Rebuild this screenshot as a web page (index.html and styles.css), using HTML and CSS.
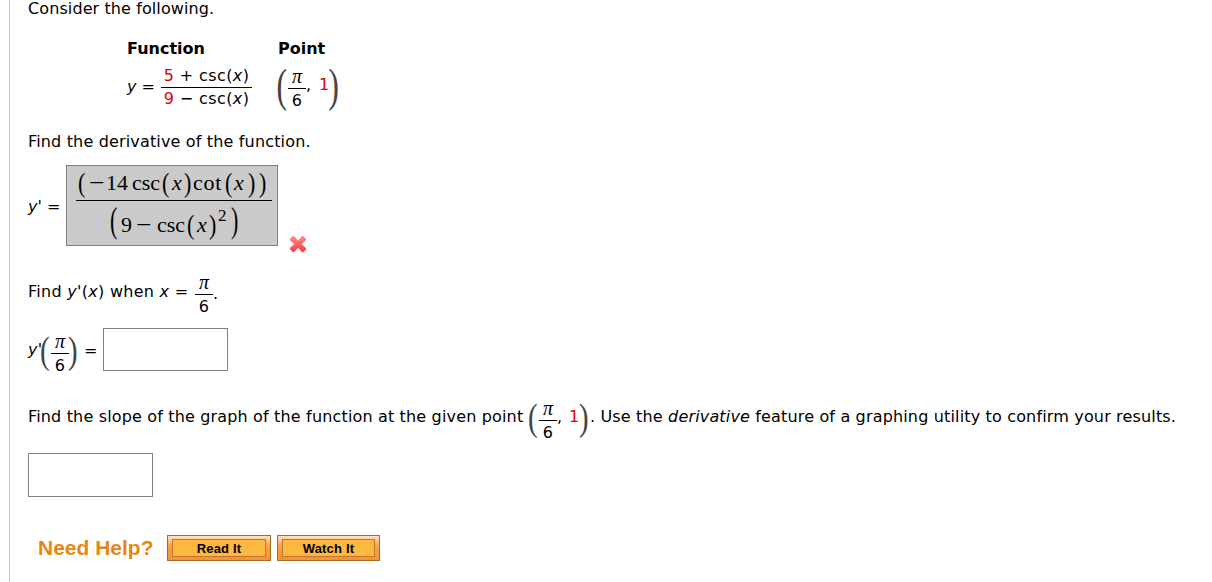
FILE: index.html
```
<!DOCTYPE html>
<html lang="en">
<head>
	<meta charset="UTF-8">
	<title>Derivative Question</title>
	<link rel="stylesheet" href="styles.css">
</head>
<body>
<main class="question">
	<p class="intro">Consider the following.</p>

	<div class="given">
		<div class="function">
			<b>Function</b>
			<div class="math function-math">
				<span class="lhs"><i>y</i> =</span>
				<span class="frac wide">
					<span class="num"><span class="red">5</span> + csc(<i>x</i>)</span>
					<span class="den"><span class="red">9</span> − csc(<i>x</i>)</span>
				</span>
			</div>
		</div>
		<div class="point">
			<b>Point</b>
			<div class="math point-math">
				<span class="paren">(</span>
				<span class="frac low"><span class="num pi">π</span><span class="den">6</span></span>
				<span class="comma">,</span><span class="red one">1</span>
				<span class="paren">)</span>
			</div>
		</div>
	</div>

	<p class="find">Find the derivative of the function.</p>

	<div class="math answer-row">
		<span class="prime-label"><i>y'</i> =</span>
		<div class="answer">
			<div class="tex top">
				<span class="tall w11">(</span><span class="w17 minus">−</span><span class="w26">14</span><span class="w30">csc</span><span class="tall w10">(</span><i class="w12">x</i><span class="tall w9">)</span><span class="w32 cot">cot</span><span class="tall w9">(</span><i class="w14">x</i><span class="tall w11">)</span><span class="tall">)</span>
			</div>
			<div class="tex bottom">
				<span class="taller w11">(</span><span class="w15">9</span><span class="w21 minus">−</span><span class="w30">csc</span><span class="tall w10">(</span><i class="w12">x</i><span class="tall w9">)</span><span class="sup">2</span><span class="taller">)</span>
			</div>
		</div>
		<svg class="wrong" width="18" height="18" viewBox="0 0 18 18">
			<defs>
				<linearGradient id="cross" x1="0" y1="0" x2="0" y2="1">
					<stop offset="0" stop-color="#ff8b8b"/>
					<stop offset="1" stop-color="#f83c3c"/>
				</linearGradient>
			</defs>
			<path d="M1 4L3.6 1.1Q4.6 .6 5.5 1.6L9 5.8L12.5 1.6Q13.5 .6 14.5 1.3L16.8 3.6Q17.5 4.6 16.5 5.6L12.6 9.2L16.8 12.8Q17.5 13.7 16.8 14.7L14.6 16.9Q13.5 17.7 12.5 16.7L9 12.7L5.5 16.7Q4.6 17.6 3.5 16.8L1.2 14.6Q.5 13.5 1.4 12.6L5.4 9.1L1.2 5.6Q.3 4.8 1 4Z" fill="url(#cross)"/>
		</svg>
	</div>

	<div class="math when-row">
		<span class="when">Find <i>y'</i>(<i>x</i>) when <i>x</i> =</span>
		<span class="frac"><span class="num pi">π</span><span class="den">6</span></span><span class="stop">.</span>
	</div>

	<div class="math value-row">
		<i class="value-label">y'</i>
		<span class="paren small">(</span>
		<span class="frac low"><span class="num pi">π</span><span class="den">6</span></span>
		<span class="paren small">)</span>
		<span class="equals">=</span>
		<input class="blank" type="text">
	</div>

	<div class="math slope-row">
		<span class="slope-text">Find the slope of the graph of the function at the given point</span>
		<span class="paren small">(</span>
		<span class="frac low"><span class="num pi">π</span><span class="den">6</span></span>
		<span class="comma">,</span><span class="red one">1</span>
		<span class="paren small">)</span>
		<span class="slope-end">. Use the <i>derivative</i> feature of a graphing utility to confirm your results.</span>
	</div>

	<input class="blank slope-blank" type="text">

	<div class="help">
		<span class="help-title">Need Help?</span>
		<button type="button"><span>Read It</span></button>
		<button type="button" class="watch"><span>Watch It</span></button>
	</div>
</main>
</body>
</html>
```
FILE: styles.css
```
*{
	box-sizing: border-box;
}
body{
	margin: 0;
	background: white;
	color: black;
	font: 16px/20px "DejaVu Sans", Verdana, sans-serif;
	letter-spacing: 0.16px;
}
p{
	margin: 0;
}
.question{
	height: 582px;
	margin-left: 9px;
	padding-left: 18px;
	border-left: 1px solid #c8c8c8;
	overflow: hidden;
	white-space: nowrap;
}
.red{
	color: #dd0000;
}
.intro{
	line-height: 17px;
	letter-spacing: 0.1px;
}

/* function and point columns */
.given{
	display: flex;
	margin: 22px 0 0 99px;
	height: 73px;
}
.given b{
	display: block;
	height: 19px;
	letter-spacing: 0;
}
.function{
	width: 151px;
}
.math{
	display: flex;
	align-items: center;
}
.function-math{
	height: 60px;
}
.point-math{
	height: 54px;
}
.lhs{
	width: 34px;
	padding-bottom: 2px;
	letter-spacing: 0;
}
.frac{
	flex: none;
	width: 18px;
	text-align: center;
}
.frac.wide{
	width: 91px;
	letter-spacing: 0.4px;
}
.frac.low{
	margin-top: 8px;
}
.num, .den{
	display: block;
	height: 22px;
	line-height: 22px;
}
.wide .num{
	line-height: 20px;
}
.wide .den{
	line-height: 22px;
}
.den{
	line-height: 24px;
}
.num{
	border-bottom: 1px solid black;
}
.pi{
	font-family: "Liberation Serif", serif;
	font-style: italic;
	font-size: 20px;
	line-height: 19px;
}
.paren{
	flex: none;
	width: 10px;
	font: 24px/24px "Liberation Serif", serif;
	color: #444;
	transform: scale(1.3, 1.95);
}
.paren.small{
	transform: scale(1.2, 1.6);
}
.comma{
	width: 13px;
}
.one{
	width: 11px;
}

.find{
	height: 20px;
	margin-top: 20px;
}

/* graded answer */
.answer-row{
	height: 81px;
	margin-top: 13px;
}
.prime-label{
	width: 38px;
	padding-top: 2px;
	letter-spacing: 0;
}
.answer{
	width: 212px;
	height: 81px;
	padding: 0 5px 0 9px;
	border: 1px solid #808080;
	background: #cacaca;
}
.tex{
	display: flex;
	align-items: center;
	font: 22px/34px "Liberation Serif", serif;
	letter-spacing: 0;
}
.top{
	height: 35px;
	padding-left: 2px;
	border-bottom: 1px solid black;
}
.bottom{
	height: 48px;
	padding-left: 34px;
}
.w9{ width: 9px; }
.w10{ width: 10px; }
.w11{ width: 11px; }
.w12{ width: 12px; }
.w14{ width: 14px; }
.w15{ width: 15px; }
.w17{ width: 17px; }
.w21{ width: 21px; }
.w26{ width: 26px; }
.w30{ width: 30px; }
.w32{ width: 32px; }
.cot{
	letter-spacing: 0.7px;
}
.minus{
	transform: scaleX(1.25);
	transform-origin: 0 50%;
}
.tall{
	transform: scaleY(1.25);
}
.taller{
	transform: translateY(-4px) scaleY(1.6);
}
.sup{
	width: 13px;
	font-size: 17px;
	padding-bottom: 18px;
}
.wrong{
	align-self: flex-end;
	margin: 0 0 -7px 11px;
}

.when-row{
	height: 50px;
	margin-top: 24px;
}
.when{
	width: 167px;
	padding-bottom: 6px;
	letter-spacing: 0.28px;
}
.stop{
	padding-bottom: 2px;
}
.value-row{
	height: 51px;
	margin-top: 4px;
}
.value-label{
	width: 13px;
}
.equals{
	width: 24px;
	padding: 2px 0 0 5px;
}
.blank{
	width: 125px;
	height: 43px;
	padding: 0;
	border: 1px solid #808080;
	background: white;
}
.slope-row{
	height: 50px;
	margin-top: 17px;
}
.slope-text{
	width: 501px;
}
.slope-row .comma{
	width: 12px;
}
.slope-blank{
	display: block;
	height: 44px;
	margin-top: 11px;
}

/* help bar */
.help{
	display: flex;
	margin: 38px 0 0 10px;
	font-family: "Liberation Sans", Arial, sans-serif;
}
.help-title{
	width: 129px;
	color: #e9860c;
	font-size: 21px;
	font-weight: bold;
	line-height: 26px;
	letter-spacing: 0;
}
button{
	width: 104px;
	height: 26px;
	margin-right: 6px;
	padding: 3px 4px;
	border: 1px solid #a36d29;
	background: linear-gradient(#fde3c8, #fba04a 40%, #f79130);
	font: bold 13px/17px "Liberation Sans", Arial, sans-serif;
	letter-spacing: 0.2px;
}
button span{
	display: block;
	height: 18px;
	border: 1px solid #bd7a2c;
	background: #fdb840;
	line-height: 18px;
}
button.watch{
	width: 103px;
}
```
